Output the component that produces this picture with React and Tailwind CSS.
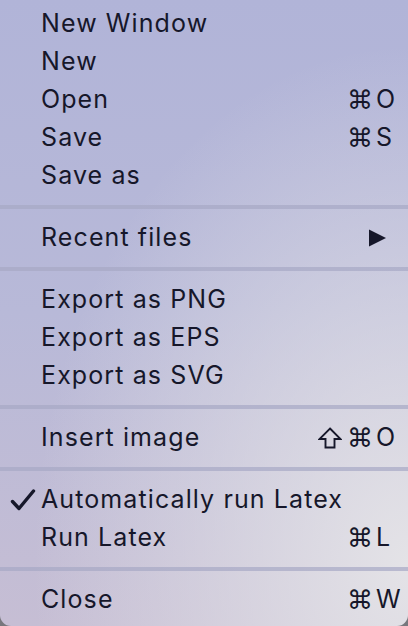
import React from 'react';

const sections = [
  [
    { label: 'New Window' },
    { label: 'New' },
    { label: 'Open', mods: '⌘', key: 'O' },
    { label: 'Save', mods: '⌘', key: 'S' },
    { label: 'Save as' },
  ],
  [{ label: 'Recent files', submenu: true }],
  [
    { label: 'Export as PNG' },
    { label: 'Export as EPS' },
    { label: 'Export as SVG' },
  ],
  [{ label: 'Insert image', shift: true, mods: '⌘', key: 'O' }],
  [
    { label: 'Automatically run Latex', checked: true },
    { label: 'Run Latex', mods: '⌘', key: 'L' },
  ],
  [{ label: 'Close', mods: '⌘', key: 'W' }],
];

function Check() {
  return (
    <svg width="26" height="22" viewBox="0 0 26 22" className="ml-[10px]">
      <path d="M2.5 12.5 L9 19.5 L23.5 2" fill="none" stroke="#16172a" strokeWidth="3.4" strokeLinecap="round" strokeLinejoin="round" />
    </svg>
  );
}

function Shift() {
  return (
    <svg width="24" height="22" viewBox="0 0 24 22" className="mr-[5px]">
      <path d="M12 1.5 L22.5 12 L16.5 12 L16.5 20.5 L7.5 20.5 L7.5 12 L1.5 12 Z" fill="none" stroke="#16172a" strokeWidth="1.9" strokeLinejoin="miter" />
    </svg>
  );
}

function Item({ item }) {
  return (
    <div className="flex h-[38px] items-center">
      <div className="flex w-[41px] shrink-0 items-center">{item.checked && <Check />}</div>
      <div className="flex-1 whitespace-nowrap tracking-[1.1px]">{item.label}</div>
      {item.mods && (
        <div className="flex items-center">
          {item.shift && <Shift />}
          <span className="pr-[3px] font-['DejaVu_Sans',sans-serif] text-[26px]">{item.mods}</span>
          <span className="w-[32px]">{item.key}</span>
        </div>
      )}
      {item.submenu && (
        <svg width="18" height="18" viewBox="0 0 18 18" className="mr-[21px]">
          <path d="M0 0.5 L17 9 L0 17.5 Z" fill="#16172a" />
        </svg>
      )}
    </div>
  );
}

export default function App() {
  return (
    <div className="h-[626px] w-[408px] overflow-hidden bg-[#77777d]">
      <div className="h-[626px] w-[408px] rounded-b-[11px] bg-[radial-gradient(ellipse_at_100%_90%,#e4e3e7_0%,rgba(228,227,231,0)_65%),linear-gradient(180deg,#b1b4d8_0%,#b8b9d8_50%,#c6bed4_100%)] pt-[5px] font-['Inter',sans-serif] text-[25px] leading-normal text-[#16172a]">
        {sections.map((sec, i) => (
          <div key={i}>
            {i > 0 && (
              <div className="py-[10px]">
                <div className="h-[4px] bg-[#a7a8c4]/70" />
              </div>
            )}
            {sec.map((item) => (
              <Item key={item.label} item={item} />
            ))}
          </div>
        ))}
      </div>
    </div>
  );
}
